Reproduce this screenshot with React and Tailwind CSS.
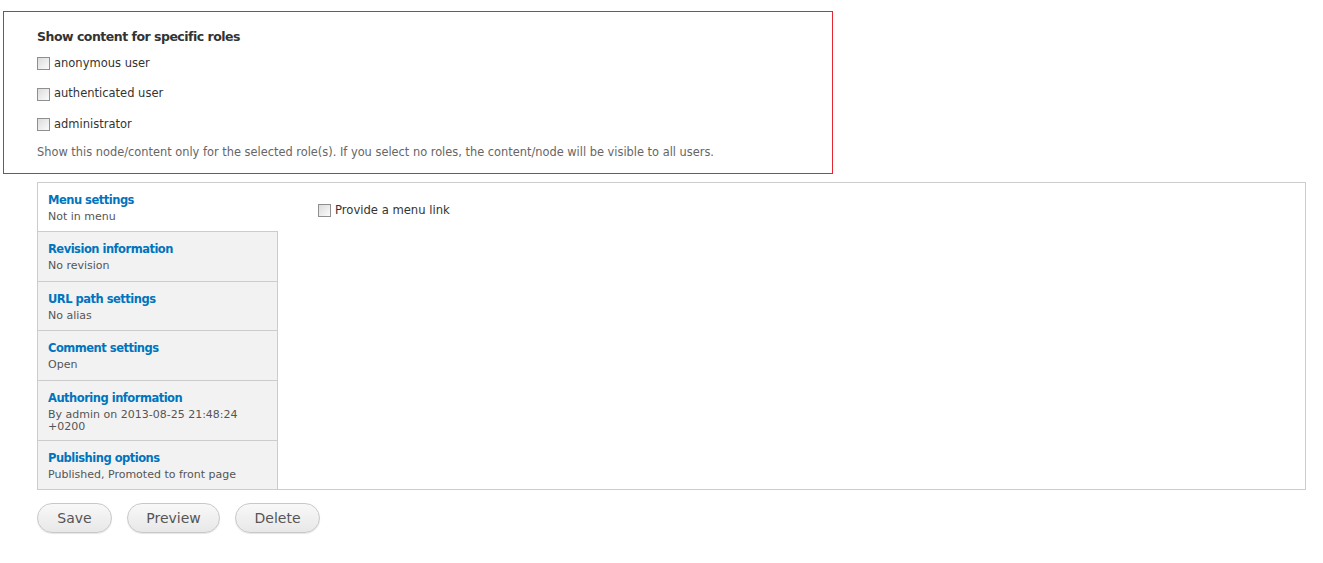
import React from "react";

function Box() {
  return (
    <span className="inline-block w-[13px] h-[13px] border border-[#8f8f8f] bg-gradient-to-br from-[#dcdcdc] to-[#fbfbfb] shrink-0" />
  );
}

const tabs = [
  { t: "Menu settings", s: "Not in menu", h: 49, sel: true },
  { t: "Revision information", s: "No revision", h: 50 },
  { t: "URL path settings", s: "No alias", h: 49 },
  { t: "Comment settings", s: "Open", h: 50 },
  { t: "Authoring information", s: "By admin on 2013-08-25 21:48:24 +0200", h: 60 },
  { t: "Publishing options", s: "Published, Promoted to front page", h: 48, last: true },
];

export default function App() {
  return (
    <div className="w-[1323px] h-[563px] bg-white text-[#333] font-['DejaVu_Sans',Verdana,sans-serif]">
      <div className="pt-[11px] pl-[3px]">
        <div className="w-[830px] h-[163px] border border-[#e3262f] pl-[33px] pt-[17px]">
          <div className="text-[12.5px] font-bold leading-[16px] tracking-[-0.5px] text-[#333]">Show content for specific roles</div>
          <div className="mt-[12px] flex flex-col gap-[17.5px]">
            {["anonymous user", "authenticated user", "administrator"].map((r) => (
              <label key={r} className="flex items-center gap-[4px] h-[13px] text-[11.5px] text-[#333]">
                <Box />
                <span>{r}</span>
              </label>
            ))}
          </div>
          <div className="mt-[14px] text-[11.4px] text-[#666] leading-[14px]">
            Show this node/content only for the selected role(s). If you select no roles, the content/node will be visible to all users.
          </div>
        </div>
      </div>
      <div className="ml-[37px] mt-[8px] w-[1269px] h-[308px] border border-[#ccc] flex">
        <div className="w-[240px] flex flex-col">
          {tabs.map((tab) => (
            <div
              key={tab.t}
              style={{ height: tab.h }}
              className={
                "px-[10px] pt-[10px] " +
                (tab.sel ? "bg-white border-b border-[#ccc]" : "bg-[#f2f2f2] border-r border-[#ccc] " + (tab.last ? "" : "border-b"))
              }
            >
              <div className="text-[11.5px] font-bold tracking-[-0.5px] text-[#0074bd] leading-[15px]">{tab.t}</div>
              <div className="text-[11px] text-[#555] leading-[12px] mt-[3px] w-[210px]">{tab.s}</div>
            </div>
          ))}
        </div>
        <div className="flex-1 pl-[40px] pt-[19px]">
          <label className="flex items-center gap-[4px] text-[11.6px] text-[#333]">
            <Box />
            <span>Provide a menu link</span>
          </label>
        </div>
      </div>
      <div className="ml-[37px] mt-[13px] flex gap-[15px]">
        {[["Save", 75], ["Preview", 93], ["Delete", 85]].map(([b, w]) => (
          <button
            key={b}
            style={{ width: w }}
            className="h-[30px] pt-[1px] rounded-full border border-[#c8c8c8] bg-gradient-to-b from-[#f8f8f8] to-[#e8e8e8] text-[14px] text-[#555] shadow-[0_1px_1px_rgba(0,0,0,0.1)]"
          >
            {b}
          </button>
        ))}
      </div>
    </div>
  );
}
